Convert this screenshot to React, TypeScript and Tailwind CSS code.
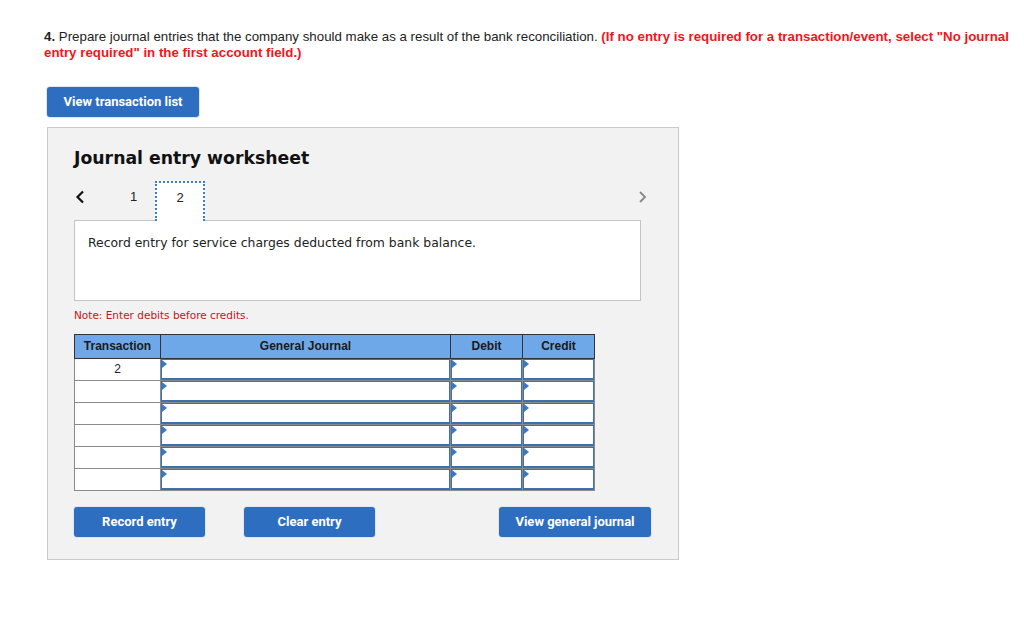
import React from 'react';

const btn =
  'h-[30px] rounded-[3px] bg-[#2d6ec1] text-white text-[13px] font-bold font-["Roboto",sans-serif] shadow-[0_0_0_1px_#dfe6ef]';

function InputCell() {
  return (
    <td className="border border-[#8a8a8a] p-0 h-[22px]">
      <div className="relative h-[21px] border border-[#3e6fae] border-b-2 bg-white">
        <span className="absolute left-0 top-0 w-0 h-0 border-y-[4px] border-y-transparent border-l-[5px] border-l-[#3a78c8]" />
      </div>
    </td>
  );
}

export default function App() {
  const rows = ['2', '', '', '', '', ''];

  return (
    <div className="w-[1024px] h-[621px] bg-white font-['Liberation_Sans',Arial,sans-serif] text-[#222]">
      <div className="pt-[29px] pl-[44px] pr-[4px] text-[13.3px] leading-[16px]">
        <span className="font-bold">4.</span> Prepare journal entries that the company should make as a result of the bank reconciliation.{' '}
        <span className="font-bold text-[#f0161a]">
          (If no entry is required for a transaction/event, select "No journal entry required" in the first account field.)
        </span>
      </div>

      <div className="pl-[47px] pt-[26px]">
        <button className={`${btn} w-[152px]`}>View transaction list</button>
      </div>

      <div className="ml-[47px] mt-[10px] w-[632px] h-[433px] border border-[#cacaca] bg-[#f2f2f2] pl-[26px] pr-[27px]">
        <h2 className="pt-[19px] text-[17.3px] font-bold font-['DejaVu_Sans',Verdana,sans-serif] text-[#111] leading-[22px]">
          Journal entry worksheet
        </h2>

        <div className="mt-[12px] flex items-end h-[39px]">
          <div className="w-[56px] h-[39px] flex items-center pl-[1px] pb-[8px]">
            <svg width="10" height="14" viewBox="0 0 10 14">
              <path d="M8 1.5 L2.5 7 L8 12.5" fill="none" stroke="#111" strokeWidth="2.2" />
            </svg>
          </div>
          <div className="w-[25px] h-[39px] flex items-center pb-[8px] text-[13px] text-[#222]">1</div>
          <div className="w-[50px] h-[40px] mb-[-1px] bg-white border-2 border-dotted border-[#3c7cc8] border-b-0 flex items-center justify-center pb-[8px] text-[13px] text-[#222] relative z-10">
            2
          </div>
          <div className="flex-1" />
          <div className="h-[39px] flex items-center pr-[4px] pb-[8px]">
            <svg width="9" height="14" viewBox="0 0 9 14">
              <path d="M2 2 L7 7 L2 12" fill="none" stroke="#888" strokeWidth="1.8" />
            </svg>
          </div>
        </div>

        <div className="w-[567px] h-[81px] bg-white border border-[#c4c4c4] pl-[13px] pt-[13px] text-[12.4px] font-['DejaVu_Sans',Verdana,sans-serif] text-[#222]">
          Record entry for service charges deducted from bank balance.
        </div>

        <p className="mt-[7px] text-[10.5px] font-['DejaVu_Sans',Verdana,sans-serif] text-[#c8141c]">
          Note: Enter debits before credits.
        </p>

        <table className="mt-[10px] border-collapse text-[12px]">
          <thead>
            <tr className="bg-[#6ea8e8] h-[24px]">
              <th className="w-[86px] border border-[#333] font-bold text-[#1a1a1a]">Transaction</th>
              <th className="w-[290px] border border-[#333] font-bold text-[#1a1a1a]">General Journal</th>
              <th className="w-[72px] border border-[#333] font-bold text-[#1a1a1a]">Debit</th>
              <th className="w-[72px] border border-[#333] font-bold text-[#1a1a1a]">Credit</th>
            </tr>
          </thead>
          <tbody>
            {rows.map((t, i) => (
              <tr key={i} className="h-[22px]">
                <td className="border border-[#8a8a8a] bg-white text-center text-[12px] align-middle">{t}</td>
                <InputCell />
                <InputCell />
                <InputCell />
              </tr>
            ))}
          </tbody>
        </table>

        <div className="mt-[16px] flex">
          <button className={`${btn} w-[131px]`}>Record entry</button>
          <button className={`${btn} w-[131px] ml-[39px]`}>Clear entry</button>
          <button className={`${btn} w-[152px] ml-[124px]`}>View general journal</button>
        </div>
      </div>
    </div>
  );
}
